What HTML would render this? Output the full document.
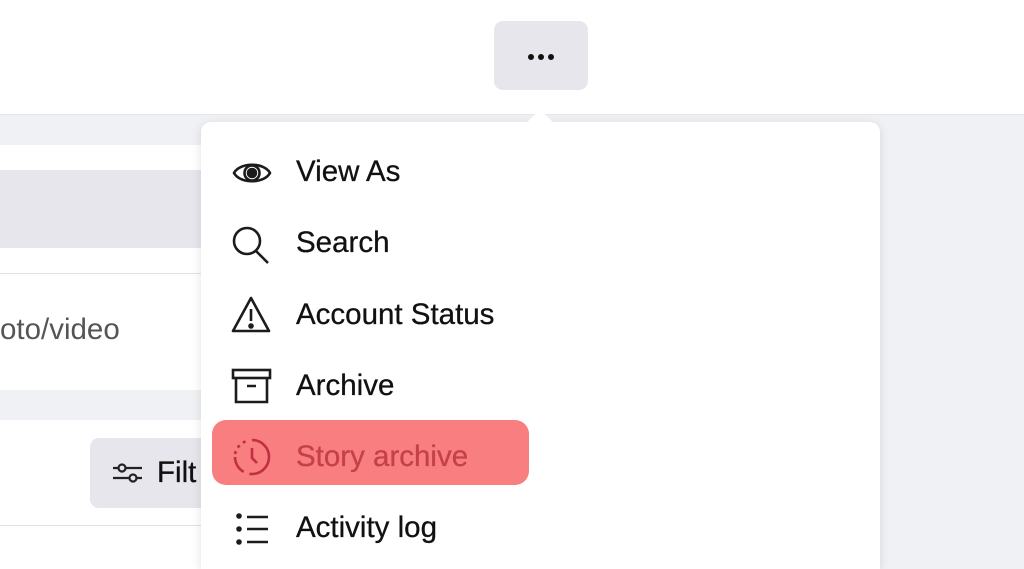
<!DOCTYPE html>
<html><head><meta charset="utf-8"><style>
*{margin:0;padding:0;box-sizing:border-box}
html,body{width:1024px;height:569px;overflow:hidden}
body{background:#f0f1f4;font-family:"Liberation Sans",sans-serif;position:relative}
.top{position:absolute;left:0;top:0;width:1024px;height:115px;background:#fff;border-bottom:1px solid #e4e5e8}
.more{position:absolute;left:494px;top:21px;width:94px;height:69px;background:#e6e6ec;border-radius:9px}
.more i{position:absolute;top:33px;width:6px;height:6px;border-radius:50%;background:#111}
.card{position:absolute;background:#fff}
.menu{position:absolute;left:201px;top:122px;width:679px;height:447px;background:#fff;border-radius:10px 10px 0 0;box-shadow:0 2px 10px rgba(0,0,0,.12)}
.arrow{position:absolute;left:531px;top:113px;width:18px;height:18px;background:#fff;transform:rotate(45deg)}
.item{position:absolute;left:296px;font-size:29.5px;color:#111;line-height:32px;-webkit-text-stroke:0.3px #111}
.ic{position:absolute;left:231px}
.hl{position:absolute;left:212px;top:420px;width:317px;height:65px;background:#f87e80;border-radius:14px}
</style></head><body>
<div class="top"></div>
<div class="more"><i style="left:34px"></i><i style="left:44px"></i><i style="left:54px"></i></div>
<div class="card" style="left:0;top:145px;width:210px;height:245px"></div>
<div style="position:absolute;left:0;top:170px;width:210px;height:78px;background:#e6e6ec"></div>
<div style="position:absolute;left:0;top:273px;width:210px;height:1px;background:#e2e2e6"></div>
<div style="position:absolute;left:0;top:313px;font-size:29.5px;color:#555">oto/video</div>
<div class="card" style="left:0;top:420px;width:210px;height:149px"></div>
<div style="position:absolute;left:90px;top:438px;width:120px;height:70px;background:#e6e6ec;border-radius:9px"></div>
<svg style="position:absolute;left:112px;top:460px" width="34" height="26" viewBox="0 0 34 26" fill="none" stroke="#222" stroke-width="2.2"><path d="M1 8h5M14 8h16M1 18h16M25 18h5"/><circle cx="10" cy="8" r="3.5"/><circle cx="21" cy="18" r="3.5"/></svg>
<div style="position:absolute;left:157px;top:456px;font-size:29.5px;color:#111;-webkit-text-stroke:0.3px #111">Filt</div>
<div style="position:absolute;left:0;top:525px;width:210px;height:1px;background:#e2e2e6"></div>
<div class="menu"></div>
<div class="arrow"></div>
<div class="hl"></div>
<svg class="ic" style="top:158px" width="42" height="30" viewBox="0 0 42 30" fill="none" stroke="#1c1c1c" stroke-width="2.6"><path d="M3 15C9 4 33 4 39 15C33 26 9 26 3 15Z"/><circle cx="21" cy="15" r="7.5"/><circle cx="21" cy="15" r="4" fill="#1c1c1c"/></svg>
<div class="item" style="top:156px">View As</div>
<svg class="ic" style="top:224px" width="42" height="42" viewBox="0 0 42 42" fill="none" stroke="#1c1c1c" stroke-width="2.6"><circle cx="16" cy="17" r="13"/><path d="M25 27l12 12"/></svg>
<div class="item" style="top:227px">Search</div>
<svg class="ic" style="top:295px" width="42" height="40" viewBox="0 0 42 40" fill="none" stroke="#1c1c1c" stroke-width="2.6" stroke-linejoin="round"><path d="M20 3L2 36h36Z"/><path d="M20 14v12"/><circle cx="20" cy="31" r="1.5" fill="#1c1c1c"/></svg>
<div class="item" style="top:299px">Account Status</div>
<svg class="ic" style="top:368px" width="42" height="36" viewBox="0 0 42 36" fill="none" stroke="#1c1c1c" stroke-width="2.6"><rect x="2" y="2" width="37" height="8"/><path d="M5 10v24h31V10M16 18h9"/></svg>
<div class="item" style="top:370px">Archive</div>
<svg class="ic" style="top:437px" width="42" height="40" viewBox="0 0 42 40" fill="none" stroke="#c03040" stroke-width="2.6"><path d="M21 3a17 17 0 1 1 -17 17" stroke-dasharray="56 6"/><path d="M4 17a17 17 0 0 1 12 -13" stroke-dasharray="3 4"/><path d="M21 11v10l5 5"/></svg>
<div class="item" style="top:441px;color:#c6404a;-webkit-text-stroke:0.3px #c6404a">Story archive</div>
<svg class="ic" style="top:512px" width="42" height="34" viewBox="0 0 42 34" fill="#1c1c1c" stroke="#1c1c1c" stroke-width="2.6"><circle cx="8" cy="4" r="2.8" stroke="none"/><circle cx="8" cy="17" r="2.8" stroke="none"/><circle cx="8" cy="30" r="2.8" stroke="none"/><path d="M16 5h21M16 17h21M16 30h21"/></svg>
<div class="item" style="top:512px">Activity log</div>
</body></html>
